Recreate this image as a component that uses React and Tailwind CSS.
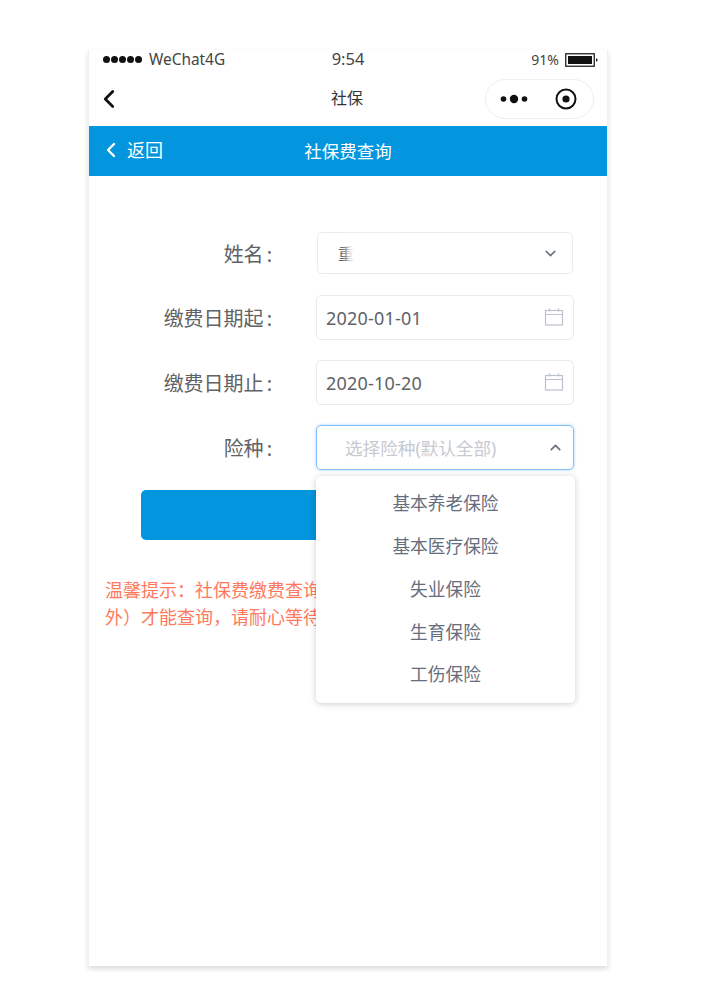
import React from "react";
import { ChevronDown, ChevronLeft, ChevronUp } from "lucide-react";

const FONT = "font-['Noto_Sans','Noto_Sans_CJK_SC',sans-serif]";

const CalendarIcon = () => (
  <svg className="-mt-[2px]" width="20" height="20" viewBox="0 0 20 20" fill="none" stroke="#bcc3cd" strokeWidth="1.2">
    <rect x="1.5" y="3.5" width="17" height="14.5" />
    <path d="M1.5 7.5h17M5.5 1.5v3M14.5 1.5v3" />
  </svg>
);

const Row = ({ label, children }) => (
  <div className="flex items-center">
    <div className="w-[183px] pt-[3px] text-right text-[20px] leading-none text-[#606266]">
      {label}
      <span className="ml-[3px]">:</span>
    </div>
    <div className="ml-[44px] w-[258px]">{children}</div>
  </div>
);

const DateField = ({ value }) => (
  <div className="flex h-[45px] items-center justify-between rounded-[5px] border border-[#e9ebef] bg-white pl-[9px] pr-[9px] text-[18px] tracking-[0.2px] text-[#606266]">
    <span className="pt-[1px]">{value}</span>
    <CalendarIcon />
  </div>
);

export default function App() {
  const insuranceTypes = ["基本养老保险", "基本医疗保险", "失业保险", "生育保险", "工伤保险"];

  return (
    <div className={`${FONT} h-[992px] w-[722px] overflow-hidden bg-white pl-[88px] pt-[50px]`}>
      <div className="relative h-[916px] w-[520px] border-x border-x-[#eef1f6] bg-white shadow-[0_3px_5px_rgba(0,0,0,0.14)]">
        {/* status bar */}
        <div className="grid h-[19px] grid-cols-3 items-center pl-[14px] pr-[9px] text-[14px] leading-none text-[#444]">
          <div className="flex items-center gap-[1.5px]">
            {[0, 1, 2, 3, 4].map((i) => (
              <span key={i} className="h-[6.5px] w-[6.5px] rounded-full bg-[#111]" />
            ))}
            <span className="ml-[6px] whitespace-nowrap text-[15.4px]">WeChat4G</span>
          </div>
          <div className="mr-[5px] text-center text-[16.5px]">9:54</div>
          <div className="flex items-center justify-end gap-[6px]">
            <span>91%</span>
            <svg width="33" height="14" viewBox="0 0 33 14">
              <rect x="0.75" y="0.75" width="28.5" height="12.5" fill="none" stroke="#222" strokeWidth="1.3" />
              <rect x="3" y="3" width="24" height="8" fill="#111" />
              <path d="M31 5l2 2-2 2z" fill="#222" />
            </svg>
          </div>
        </div>

        {/* wechat nav */}
        <div className="relative flex h-[57px] items-center justify-center text-[16px] text-[#333]">
          <ChevronLeft className="absolute left-[5px] top-[15px]" size={30} strokeWidth={2.2} color="#111" />
          <span className="mr-[2px]">社保</span>
          <div className="absolute right-[13px] top-[10px] flex h-[40px] w-[109px] items-center justify-between rounded-full border border-[#efefef] pl-[14px] pr-[16px]">
            <svg width="28" height="10" viewBox="0 0 28 10" fill="#111">
              <circle cx="3.5" cy="5" r="2.8" />
              <circle cx="14" cy="5" r="4.2" />
              <circle cx="24.5" cy="5" r="2.8" />
            </svg>
            <svg width="22" height="22" viewBox="0 0 22 22" fill="none">
              <circle cx="11" cy="11" r="9.5" stroke="#111" strokeWidth="2" />
              <circle cx="11" cy="11" r="3.6" fill="#111" />
            </svg>
          </div>
        </div>

        {/* page header */}
        <div className="relative flex h-[50px] items-center justify-center bg-[#0395dd] text-white">
          <div className="absolute left-[10px] top-[9px] flex items-center gap-[4px] text-[18px] leading-[30px]">
            <ChevronLeft size={24} strokeWidth={2.4} />
            <span>返回</span>
          </div>
          <span className="text-[17.5px]">社保费查询</span>
        </div>

        {/* form */}
        <div className="flex flex-col gap-[20px] pt-[56px]">
          <div className="mb-[1px]">
            <Row label="姓名">
              <div className="mx-[1px] flex h-[42px] items-center justify-between rounded-[5px] border border-[#e9ebef] pl-[20px] pr-[13px]">
                <div className="relative pt-[1px] text-[16px] text-[#606266]">
                  <span>重</span>
                  <span className="absolute left-[9px] top-[-5px] h-[29px] w-[50px] bg-white/90 blur-[3px]" />
                </div>
                <ChevronDown size={17} strokeWidth={2.2} color="#6b7280" />
              </div>
            </Row>
          </div>
          <Row label="缴费日期起">
            <DateField value="2020-01-01" />
          </Row>
          <Row label="缴费日期止">
            <DateField value="2020-10-20" />
          </Row>
          <Row label="险种">
            <div className="flex h-[45px] items-center justify-between rounded-[5px] border border-[#85bdf5] pl-[28px] pr-[9px] text-[17.6px] text-[#c7cad1] shadow-[0_0_3px_rgba(64,158,255,0.5)]">
              <span className="pt-[1px]">选择险种(默认全部)</span>
              <ChevronUp size={17} strokeWidth={2.4} color="#6b7280" />
            </div>
          </Row>
        </div>

        {/* submit, covered by the open dropdown */}
        <div className="ml-[52px] mt-[20px] h-[50px] w-[414px] rounded-[5px] bg-[#0395dd]" />

        <div className="ml-[16px] mt-[37px] w-[211px] text-[18px] leading-[27px] text-[#ff7a5c]">
          <p className="whitespace-nowrap">温馨提示：社保费缴费查询</p>
          <p className="whitespace-nowrap">外）才能查询，请耐心等待</p>
        </div>

        {/* dropdown */}
        <div className="absolute left-[227px] top-[426px] flex h-[227px] w-[259px] flex-col items-center rounded-[5px] bg-white pt-[6px] text-[17.7px] text-[#666d7c] shadow-[0_1px_6px_rgba(0,0,0,0.2)]">
          {insuranceTypes.map((t) => (
            <div key={t} className="flex h-[42.8px] items-center">
              {t}
            </div>
          ))}
        </div>
      </div>
    </div>
  );
}
